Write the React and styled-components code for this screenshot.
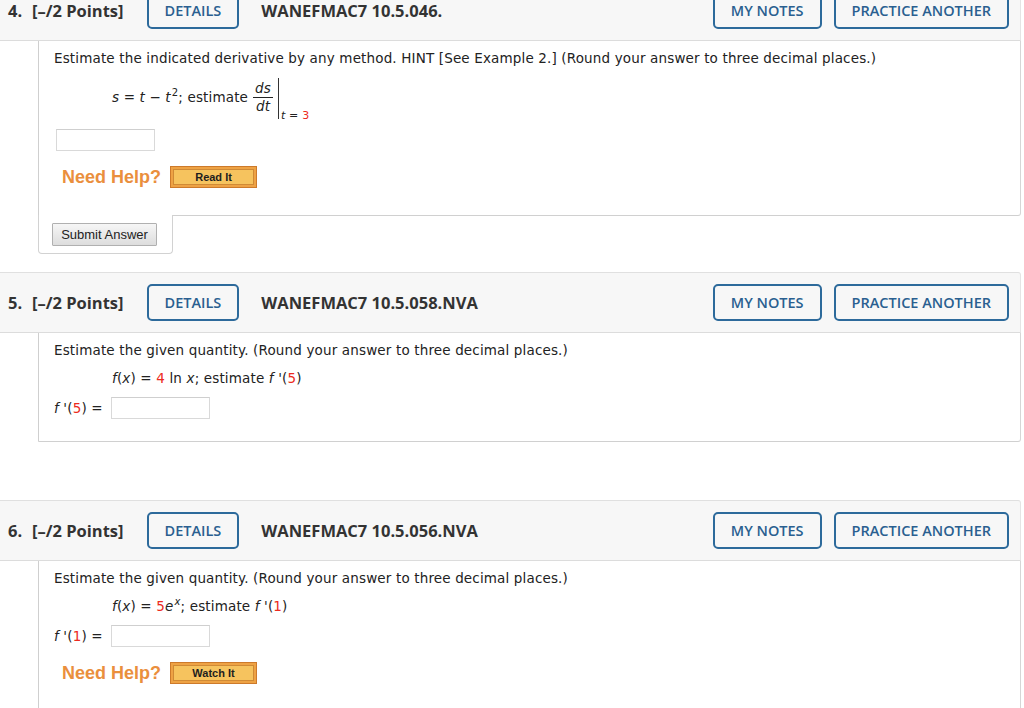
import React from "react";
import styled, { createGlobalStyle } from "styled-components";

const Global = createGlobalStyle`
  body {
    margin: 0;
    background: #fff;
    font-family: "DejaVu Sans", Verdana, sans-serif;
    color: #222;
    overflow: hidden;
  }
`;

const Page = styled.div`
  width: 1021px;
  margin-top: -20px;
`;

const Section = styled.section`
  margin-top: ${(p) => p.$gap || 0}px;
`;

const Header = styled.div`
  height: 59px;
  display: flex;
  align-items: center;
  background: #f7f7f7;
  border-top: 1px solid #e0e0e0;
  border-bottom: 1px solid #dcdcdc;
  border-right: 1px solid #e4e4e4;
  border-top-right-radius: 3px;
  padding: 0 11px 0 8px;
  font-family: "Open Sans", sans-serif;
`;

const Number = styled.span`
  font-weight: 700;
  font-size: 16.5px;
  color: #333;
  width: 24px;
`;

const Points = styled.span`
  font-weight: 700;
  font-size: 16.5px;
  color: #333;
  margin-right: 23px;
`;

const Title = styled.span`
  font-weight: 700;
  font-size: 16.5px;
  color: #333;
  margin-left: 22px;
`;

const HeadButton = styled.button`
  height: 37px;
  padding: 0 16px;
  border: 2px solid #2d6a9b;
  border-radius: 5px;
  background: transparent;
  color: #2a5f90;
  font-family: "Open Sans", sans-serif;
  font-weight: 600;
  font-size: 14.5px;
  margin-left: ${(p) => (p.$auto ? "auto" : p.$ml ? `${p.$ml}px` : "0")};
`;

const Box = styled.div`
  margin-left: 38px;
  border-left: 1px solid #cfcfcf;
  border-right: 1px solid #d6d6d6;
  border-bottom: 1px solid #d0d0d0;
  border-bottom-right-radius: 3px;
  padding: 8px 15px ${(p) => p.$bottom || 23}px 15px;
  font-size: 13.5px;
  letter-spacing: 0.15px;
  line-height: 18px;
  background: #fff;
`;

const Para = styled.div`
  white-space: nowrap;
`;

const MathLine = styled.div`
  margin-top: ${(p) => p.$mt || 10}px;
  padding-left: 58px;
  white-space: pre;
`;

const DerivLine = styled.div`
  margin-top: 11px;
  padding-left: 58px;
  height: 41px;
  display: flex;
  align-items: flex-start;
  white-space: pre;
`;

const DerivText = styled.span`
  margin-top: 10px;
`;

const I = styled.i`
  font-style: italic;
`;

const Sup = styled.sup`
  font-size: 10px;
  line-height: 0;
  vertical-align: 6px;
  margin-left: 1px;
  font-style: ${(p) => (p.$italic ? "italic" : "normal")};
`;

const Red = styled.span`
  color: #ec2a20;
`;

const Frac = styled.span`
  display: flex;
  flex-direction: column;
  align-items: center;
  margin: 3px 5px 0 5px;
  font-style: italic;
  line-height: 15px;
`;

const Num = styled.span`
  border-bottom: 1px solid #222;
  padding: 0 2px 1px;
`;

const Den = styled.span`
  padding-top: 1px;
`;

const EvalBar = styled.span`
  display: block;
  box-sizing: border-box;
  height: 41px;
  padding: 32px 0 0 2px;
  border-left: 1px solid #333;
  font-size: 11px;
  line-height: 12px;
`;

const AnswerRow = styled.div`
  margin-top: ${(p) => p.$mt || 10}px;
  display: flex;
  align-items: center;
  white-space: pre;
`;

const Field = styled.input`
  width: 99px;
  height: 22px;
  box-sizing: border-box;
  border: 1px solid #d9d9d9;
  border-top-color: #cfcfcf;
  margin: 0 0 0 ${(p) => p.$ml || 0}px;
  padding: 0 3px;
  font-size: 13px;
  background: #fff;
`;

const HelpRow = styled.div`
  margin-top: 15px;
  margin-left: 8px;
  display: flex;
  align-items: center;
  gap: 9px;
`;

const NeedHelp = styled.span`
  font-family: "Liberation Sans", Arial, sans-serif;
  font-weight: 700;
  font-size: 18px;
  letter-spacing: 0;
  color: #ea8f3d;
`;

const HelpButton = styled.button`
  width: 87px;
  height: 22px;
  box-sizing: border-box;
  border: 1px solid #cd7a2b;
  background: #f6c35e;
  box-shadow: inset 0 0 0 2px #eea244, inset 0 0 0 3px #d08a35;
  font-family: "Liberation Sans", Arial, sans-serif;
  font-weight: 700;
  font-size: 11px;
  color: #1e1e1e;
  padding: 0;
`;

const SubmitTab = styled.div`
  margin-left: 38px;
  margin-top: -1px;
  width: 135px;
  box-sizing: border-box;
  border: 1px solid #d2d2d2;
  border-top: none;
  border-bottom-left-radius: 4px;
  border-bottom-right-radius: 4px;
  background: #fff;
  padding: 8px 0 7px 13px;
  position: relative;
`;

const SubmitButton = styled.button`
  width: 105px;
  height: 23px;
  border: 1px solid #b0b0b0;
  border-radius: 1px;
  background: linear-gradient(#f6f6f6, #dddddd);
  font-family: "Liberation Sans", Arial, sans-serif;
  font-size: 13px;
  color: #222;
  padding: 0;
`;

function QuestionHeader({ n, title }) {
  return (
    <Header>
      <Number>{n}.</Number>
      <Points>[–/2 Points]</Points>
      <HeadButton>DETAILS</HeadButton>
      <Title>{title}</Title>
      <HeadButton $auto>MY NOTES</HeadButton>
      <HeadButton $ml={12}>PRACTICE ANOTHER</HeadButton>
    </Header>
  );
}

export default function App() {
  return (
    <>
      <Global />
      <Page>
        <Section>
          <QuestionHeader n={4} title="WANEFMAC7 10.5.046." />
          <Box $bottom={27}>
            <Para>
              Estimate the indicated derivative by any method. HINT [See Example 2.] (Round your answer to three decimal places.)
            </Para>
            <DerivLine>
              <DerivText>
                <I>s</I> = <I>t</I> − <I>t</I>
                <Sup>2</Sup>; estimate
              </DerivText>
              <Frac>
                <Num>ds</Num>
                <Den>dt</Den>
              </Frac>
              <EvalBar>
                <I>t</I> = <Red>3</Red>
              </EvalBar>
            </DerivLine>
            <AnswerRow $mt={10}>
              <Field $ml={2} />
            </AnswerRow>
            <HelpRow>
              <NeedHelp>Need Help?</NeedHelp>
              <HelpButton>Read It</HelpButton>
            </HelpRow>
          </Box>
          <SubmitTab>
            <SubmitButton>Submit Answer</SubmitButton>
          </SubmitTab>
        </Section>

        <Section $gap={18}>
          <QuestionHeader n={5} title="WANEFMAC7 10.5.058.NVA" />
          <Box $bottom={22}>
            <Para>Estimate the given quantity. (Round your answer to three decimal places.)</Para>
            <MathLine>
              <I>f</I>(<I>x</I>) = <Red>4</Red> ln <I>x</I>; estimate <I>f</I> '(<Red>5</Red>)
            </MathLine>
            <AnswerRow>
              <I>f</I> '(<Red>5</Red>) = <Field $ml={4} />
            </AnswerRow>
          </Box>
        </Section>

        <Section $gap={58}>
          <QuestionHeader n={6} title="WANEFMAC7 10.5.056.NVA" />
          <Box $bottom={40}>
            <Para>Estimate the given quantity. (Round your answer to three decimal places.)</Para>
            <MathLine>
              <I>f</I>(<I>x</I>) = <Red>5</Red><I>e</I>
              <Sup $italic>x</Sup>; estimate <I>f</I> '(<Red>1</Red>)
            </MathLine>
            <AnswerRow>
              <I>f</I> '(<Red>1</Red>) = <Field $ml={4} />
            </AnswerRow>
            <HelpRow>
              <NeedHelp>Need Help?</NeedHelp>
              <HelpButton>Watch It</HelpButton>
            </HelpRow>
          </Box>
        </Section>
      </Page>
    </>
  );
}
